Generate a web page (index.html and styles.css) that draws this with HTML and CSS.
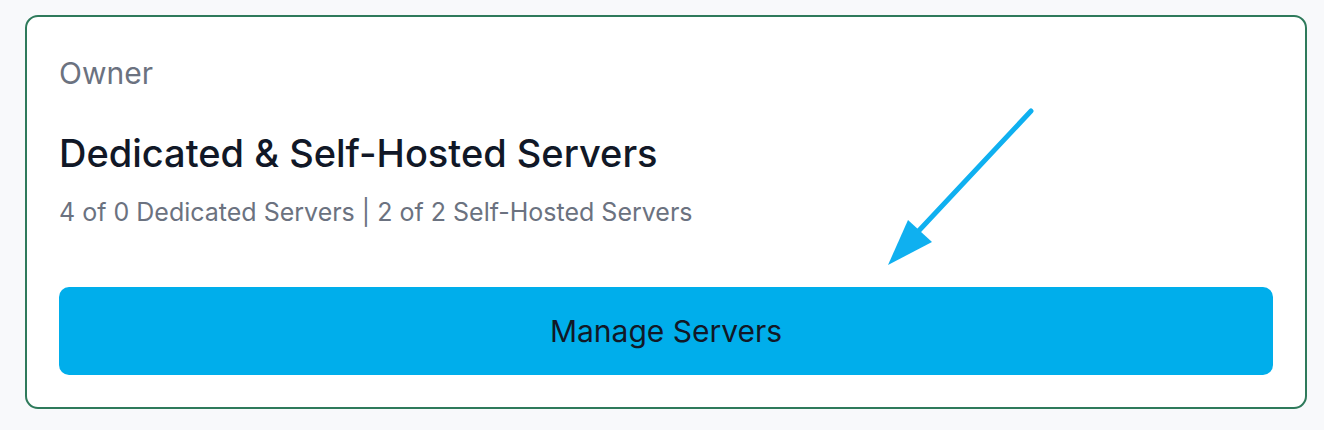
FILE: index.html
```html
<!DOCTYPE html>
<html>
<head>
<meta charset="utf-8">
<link rel="stylesheet" href="styles.css">
</head>
<body>
<div class="page">
  <div class="card">
    <div class="owner">Owner</div>
    <h2 class="title">Dedicated &amp; Self-Hosted Servers</h2>
    <div class="sub">4 of 0 Dedicated Servers | 2 of 2 Self-Hosted Servers</div>
    <button class="btn">Manage Servers</button>
    <svg class="arrow" width="1324" height="430" viewBox="0 0 1324 430">
      <line x1="1031" y1="111" x2="912" y2="238" stroke="#0fb0f0" stroke-width="5" stroke-linecap="round"/>
      <polygon points="888,265 908,220 932,242" fill="#0fb0f0"/>
    </svg>
  </div>
</div>
</body>
</html>
```
FILE: styles.css
```css
* { box-sizing: border-box; }
html, body { margin: 0; padding: 0; }
body {
  background: #f8f9fb;
  font-family: Inter, "Noto Sans", sans-serif;
  width: 1324px;
  height: 430px;
  overflow: hidden;
}
.page {
  padding: 15px 17px 0 25px;
}
.card {
  width: 1282px;
  height: 394px;
  border: 2px solid #2e7a5b;
  border-radius: 13px;
  background: #ffffff;
  padding: 38px 32px 0 32px;
  display: flex;
  flex-direction: column;
  position: relative;
}
.owner {
  font-size: 30px;
  line-height: 36px;
  color: #6b7280;
}
.title {
  margin: 39px 0 0 0;
  font-size: 38px;
  line-height: 46px;
  font-weight: 500;
  color: #111827;
}
.sub {
  margin-top: 21px;
  font-size: 25px;
  line-height: 30px;
  color: #6b7280;
}
.btn {
  margin-top: 60px;
  height: 88px;
  width: 100%;
  border: none;
  border-radius: 10px;
  background: #00aeeb;
  color: #111827;
  font-family: Inter, "Noto Sans", sans-serif;
  font-size: 30px;
  font-weight: 400;
}
.arrow {
  position: absolute;
  left: -27px;
  top: -17px;
  pointer-events: none;
}
```
